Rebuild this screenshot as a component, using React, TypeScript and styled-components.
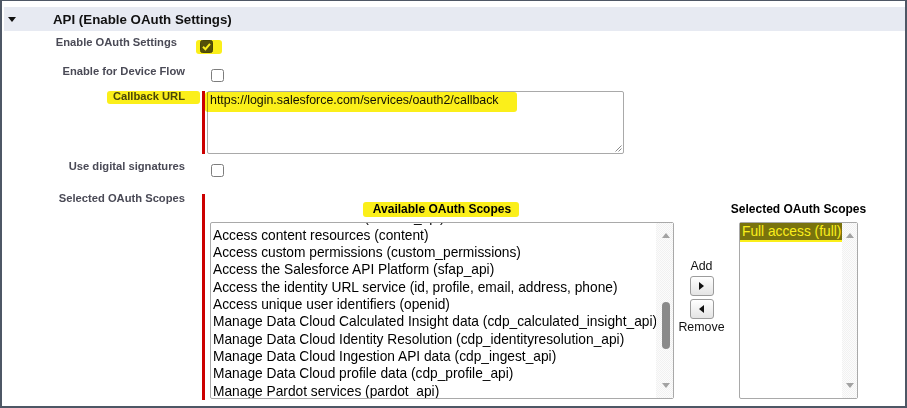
import React from 'react';
import styled, { createGlobalStyle } from 'styled-components';

const GlobalStyle = createGlobalStyle`
  html, body {
    margin: 0;
    padding: 0;
    background: #fff;
  }
  body {
    font-family: "Liberation Sans", Arial, sans-serif;
  }
`;

const Frame = styled.div`
  box-sizing: border-box;
  width: 907px;
  height: 408px;
  border: 2px solid #4e5765;
  border-top-width: 1px;
  padding: 6px 0 0 2px;
  background: #fff;
  overflow: hidden;
`;

const SectionHeader = styled.div`
  display: flex;
  align-items: center;
  height: 24px;
  padding-left: 4px;
  background: #e7eaf2;
`;

const Toggle = styled.span`
  width: 0;
  height: 0;
  border-left: 4px solid transparent;
  border-right: 4px solid transparent;
  border-top: 5px solid #111;
`;

const SectionTitle = styled.h3`
  margin: 0 0 0 37px;
  font-size: 13.3px;
  font-weight: bold;
  color: #111;
`;

const Row = styled.div<{ $labelWidth?: number; $space: number }>`
  display: grid;
  grid-template-columns: ${(p) => p.$labelWidth ?? 181}px 1fr;
  column-gap: 17px;
  align-items: start;
  margin-top: ${(p) => p.$space}px;
`;

const Label = styled.div`
  text-align: right;
  font-size: 11.2px;
  font-weight: bold;
  line-height: 13px;
  color: #4a4a56;
`;

const Field = styled.div<{ $required?: boolean; $offset?: number }>`
  border-left: 3px solid ${(p) => (p.$required ? '#c00' : 'transparent')};
  padding-left: 2px;
  margin-top: ${(p) => p.$offset ?? 0}px;
`;

const Anchor = styled.span`
  position: relative;
`;

/* highlighter stroke laid over the screenshot */
const Highlight = styled.span<{ $l: number; $t: number; $r: number; $b: number }>`
  position: absolute;
  left: ${(p) => p.$l}px;
  top: ${(p) => p.$t}px;
  right: ${(p) => p.$r}px;
  bottom: ${(p) => p.$b}px;
  background: #fbef1a;
  mix-blend-mode: multiply;
  border-radius: 3px;
  pointer-events: none;
`;

const Check = styled.span<{ $checked?: boolean; $indent: number }>`
  position: relative;
  display: block;
  box-sizing: border-box;
  width: 13px;
  height: 13px;
  margin: 4px 0 0 ${(p) => p.$indent}px;
  border: 1px solid ${(p) => (p.$checked ? '#4a4a4a' : '#7d7d7d')};
  border-radius: 2.5px;
  background: ${(p) => (p.$checked ? '#565656' : '#fff')};
  svg {
    display: block;
  }
`;

const TextBox = styled.div`
  position: relative;
  box-sizing: border-box;
  width: 417px;
  height: 63px;
  padding: 1px 2px;
  border: 1px solid #a9a9a9;
  border-radius: 2px;
  font-size: 12.4px;
  line-height: 15px;
  color: #111;
`;

const Grip = styled.svg`
  position: absolute;
  right: 1px;
  bottom: 1px;
`;

const ScopePicker = styled.div`
  display: flex;
  align-items: flex-start;
  padding: 8px 0 1px 3px;
`;

const ScopeColumn = styled.div<{ $width: number }>`
  display: flex;
  flex-direction: column;
  align-items: center;
  width: ${(p) => p.$width}px;
`;

const ColumnHeading = styled.div`
  margin-bottom: 6px;
  font-size: 12px;
  font-weight: bold;
  line-height: 14px;
  color: #000;
`;

const ListBox = styled.div<{ $width: number }>`
  box-sizing: border-box;
  display: flex;
  width: ${(p) => p.$width}px;
  height: 177px;
  border: 1px solid #a9a9a9;
  border-radius: 2px;
  background: #fff;
`;

const Viewport = styled.div`
  flex: 1;
  min-width: 0;
  overflow: hidden;
`;

const Option = styled.div<{ $selected?: boolean }>`
  position: relative;
  padding-left: 2px;
  font-size: 13.75px;
  line-height: 17.33px;
  white-space: nowrap;
  color: ${(p) => (p.$selected ? '#fff' : '#000')};
  background: ${(p) => (p.$selected ? '#7b7b7b' : 'transparent')};
`;

const ScrollBar = styled.div<{ $lead: number }>`
  display: flex;
  flex-direction: column;
  align-items: center;
  box-sizing: border-box;
  width: ${(p) => 14 + p.$lead}px;
  padding-left: ${(p) => p.$lead}px;
  background: repeating-conic-gradient(#f1f1f1 0 25%, #fcfcfc 0 50%) 0 0 / 2px 2px;
`;

const Arrow = styled.span<{ $dir: 'up' | 'down' | 'left' | 'right'; $color: string }>`
  display: block;
  width: 0;
  height: 0;
  ${(p) =>
    p.$dir === 'up'
      ? `border-left: 4.5px solid transparent; border-right: 4.5px solid transparent; border-bottom: 5px solid ${p.$color};`
      : p.$dir === 'down'
      ? `border-left: 4.5px solid transparent; border-right: 4.5px solid transparent; border-top: 5px solid ${p.$color};`
      : p.$dir === 'right'
      ? `border-top: 4px solid transparent; border-bottom: 4px solid transparent; border-left: 5px solid ${p.$color};`
      : `border-top: 4px solid transparent; border-bottom: 4px solid transparent; border-right: 5px solid ${p.$color};`}
`;

const ScrollUp = styled.div`
  margin-top: 10px;
`;

const ScrollDown = styled.div`
  margin-top: auto;
  margin-bottom: 10px;
`;

const Thumb = styled.div`
  width: 8px;
  height: 47px;
  border-radius: 4px;
  background: #8a8a8a;
`;

const MoveColumn = styled.div`
  display: flex;
  flex-direction: column;
  align-items: center;
  width: 55px;
  padding-top: 57px;
  font-size: 12.4px;
  line-height: 14px;
  color: #111;
`;

const MoveButton = styled.button<{ $gap: number }>`
  display: flex;
  align-items: center;
  justify-content: center;
  box-sizing: border-box;
  width: 24px;
  height: 20px;
  margin-top: ${(p) => p.$gap}px;
  padding: 0;
  border: 1px solid #9c9c9c;
  border-radius: 3px;
  background: linear-gradient(#ffffff, #e4e4e4);
`;

const MoveLabel = styled.span<{ $gap?: number }>`
  margin-top: ${(p) => p.$gap ?? 0}px;
`;

const available = [
  'Access Analytics REST API resources (wave_api)',
  'Access chatbot services (chatbot_api)',
  'Access content resources (content)',
  'Access custom permissions (custom_permissions)',
  'Access the Salesforce API Platform (sfap_api)',
  'Access the identity URL service (id, profile, email, address, phone)',
  'Access unique user identifiers (openid)',
  'Manage Data Cloud Calculated Insight data (cdp_calculated_insight_api)',
  'Manage Data Cloud Identity Resolution (cdp_identityresolution_api)',
  'Manage Data Cloud Ingestion API data (cdp_ingest_api)',
  'Manage Data Cloud profile data (cdp_profile_api)',
  'Manage Pardot services (pardot_api)',
  'Manage user data via APIs (api)',
  'Manage user data via Web browsers (web)',
];

const ROW = 17.33;
const firstVisible = 2;

export default function App() {
  return (
    <>
      <GlobalStyle />
      <Frame>
        <SectionHeader>
          <Toggle />
          <SectionTitle>API (Enable OAuth Settings)</SectionTitle>
        </SectionHeader>

        <Row $labelWidth={173} $space={5}>
          <Label>Enable OAuth Settings</Label>
          <Field>
            <Check $checked $indent={1}>
              <svg width="11" height="11" viewBox="0 0 11 11">
                <path d="M2 5.8 L4.4 8.2 L9 2.8" fill="none" stroke="#fff" strokeWidth="2" />
              </svg>
              <Highlight $l={-5} $t={-1} $r={-10} $b={-2} />
            </Check>
          </Field>
        </Row>

        <Row $space={12}>
          <Label>Enable for Device Flow</Label>
          <Field>
            <Check $indent={4} />
          </Field>
        </Row>

        <Row $space={8}>
          <Label>
            <Anchor>
              Callback URL
              <Highlight $l={-6} $t={1} $r={-15} $b={-2} />
            </Anchor>
          </Label>
          <Field $required $offset={1}>
            <TextBox>
              <Anchor>
                https://login.salesforce.com/services/oauth2/callback
                <Highlight $l={-5} $t={-1} $r={-18} $b={-5} />
              </Anchor>
              <Grip width="8" height="8" viewBox="0 0 8 8">
                <path d="M7.5 1.5 L1.5 7.5 M7.5 4.5 L4.5 7.5" stroke="#8a8a8a" strokeWidth="1" />
              </Grip>
            </TextBox>
          </Field>
        </Row>

        <Row $space={6}>
          <Label>Use digital signatures</Label>
          <Field>
            <Check $indent={4} />
          </Field>
        </Row>

        <Row $space={15}>
          <Label>Selected OAuth Scopes</Label>
          <Field $required $offset={2}>
            <ScopePicker>
              <ScopeColumn $width={464}>
                <ColumnHeading>
                  <Anchor>
                    Available OAuth Scopes
                    <Highlight $l={-10} $t={0} $r={-8} $b={-1} />
                  </Anchor>
                </ColumnHeading>
                <ListBox $width={464}>
                  <Viewport
                    ref={(el) => {
                      if (el) el.scrollTop = Math.round(firstVisible * ROW - 3.5);
                    }}
                  >
                    {available.map((item) => (
                      <Option key={item}>{item}</Option>
                    ))}
                  </Viewport>
                  <ScrollBar $lead={3}>
                    <ScrollUp>
                      <Arrow $dir="up" $color="#a2a2a2" />
                    </ScrollUp>
                    <Thumb style={{ marginTop: 64 }} />
                    <ScrollDown>
                      <Arrow $dir="down" $color="#a2a2a2" />
                    </ScrollDown>
                  </ScrollBar>
                </ListBox>
              </ScopeColumn>

              <MoveColumn>
                <MoveLabel>Add</MoveLabel>
                <MoveButton $gap={3} type="button">
                  <Arrow $dir="right" $color="#111" />
                </MoveButton>
                <MoveButton $gap={3} type="button">
                  <Arrow $dir="left" $color="#111" />
                </MoveButton>
                <MoveLabel $gap={1}>Remove</MoveLabel>
              </MoveColumn>

              <ScopeColumn $width={139}>
                <ColumnHeading>Selected OAuth Scopes</ColumnHeading>
                <ListBox $width={119}>
                  <Viewport>
                    <Option $selected>
                      Full access (full)
                      <Highlight $l={-5} $t={-3} $r={-16} $b={-2} />
                    </Option>
                  </Viewport>
                  <ScrollBar $lead={1}>
                    <ScrollUp>
                      <Arrow $dir="up" $color="#a2a2a2" />
                    </ScrollUp>
                    <ScrollDown>
                      <Arrow $dir="down" $color="#a2a2a2" />
                    </ScrollDown>
                  </ScrollBar>
                </ListBox>
              </ScopeColumn>
            </ScopePicker>
          </Field>
        </Row>
      </Frame>
    </>
  );
}
